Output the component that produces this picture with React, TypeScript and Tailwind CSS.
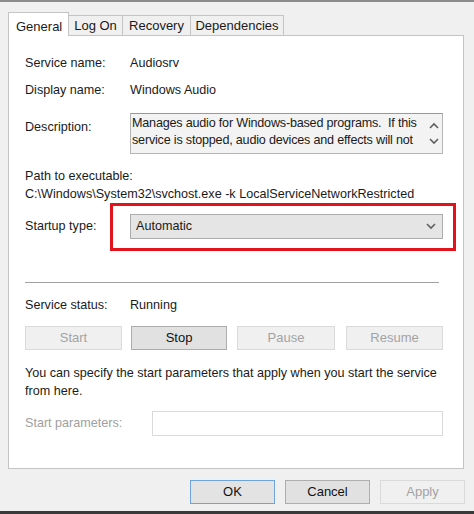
import React from "react";

const font = { fontFamily: '"Liberation Sans", Arial, sans-serif' };

function Btn({ label, disabled, def, w = "w-[96px]" }: { label: string; disabled?: boolean; def?: boolean; w?: string }) {
  const cls = disabled
    ? "bg-[#f0f0f0] border-[#dadada] text-[#a3a3a3]"
    : def
    ? "bg-[#e3e3e3] border-[#6fa3dc] text-[#111]"
    : "bg-[#e1e1e1] border-[#adadad] text-[#111]";
  return (
    <div className={`${w} h-[24px] border ${cls} flex items-center justify-center text-[13px]`}>{label}</div>
  );
}

function Chevron({ up }: { up?: boolean }) {
  return (
    <svg width="10" height="7" viewBox="0 0 10 7" className="block">
      <path d={up ? "M1 6 L5 2 L9 6" : "M1 1 L5 5 L9 1"} fill="none" stroke="#606060" strokeWidth="1.6" />
    </svg>
  );
}

export default function App() {
  return (
    <div className="w-[474px] h-[514px] bg-[#f0f0f0] flex flex-col overflow-hidden text-[12.6px] text-[#1a1a1a] whitespace-nowrap" style={font}>
      <div className="h-[2px] bg-[#8c8c8c]" />
      <div className="pl-[8px] pt-[8px] flex items-end h-[33px] text-[13px]">
        <div className="h-[24px] w-[61px] bg-white border border-b-0 border-[#c4c4c4] flex items-start pt-[4px] pl-[7px] relative z-10 -mb-[1px]">General</div>
        <div className="h-[20px] w-[54px] bg-[#f0f0f0] border border-b-0 border-l-0 border-[#c4c4c4] flex items-center justify-center">Log On</div>
        <div className="h-[20px] w-[68px] bg-[#f0f0f0] border border-b-0 border-l-0 border-[#c4c4c4] flex items-center justify-center">Recovery</div>
        <div className="h-[20px] w-[93px] bg-[#f0f0f0] border border-b-0 border-l-0 border-[#c4c4c4] flex items-center justify-center">Dependencies</div>
      </div>
      <div className="ml-[8px] w-[456px] h-[434px] bg-white border border-[#c4c4c4] relative pl-[16px] pr-[20px] flex flex-col">
        <div className="h-[18px] mt-[18px] flex items-center">
          <div className="w-[105px]">Service name:</div>
          <div>Audiosrv</div>
        </div>
        <div className="h-[18px] mt-[9px] flex items-center">
          <div className="w-[105px]">Display name:</div>
          <div>Windows Audio</div>
        </div>
        <div className="mt-[14px] flex items-start">
          <div className="w-[105px] mt-[5px] leading-[18px]">Description:</div>
          <div className="w-[313px] h-[41px] border border-[#b5b5b5] border-t-[#999] bg-[#f3f3f3] flex">
            <div className="flex-1 pl-[1px] pt-[1px] leading-[17px] overflow-hidden tracking-[-0.2px]">
              <div>Manages audio for Windows-based programs.&nbsp; If this</div>
              <div>service is stopped, audio devices and effects will not</div>
            </div>
            <div className="w-[17px] flex flex-col items-center pt-[8px] gap-[9px]">
              <Chevron up />
              <Chevron />
            </div>
          </div>
        </div>
        <div className="h-[18px] mt-[13px] flex items-center">Path to executable:</div>
        <div className="h-[18px] flex items-center">C:\Windows\System32\svchost.exe -k LocalServiceNetworkRestricted</div>
        <div className="mt-[11px] flex items-center relative">
          <div className="w-[105px]">Startup type:</div>
          <div className="w-[313px] h-[25px] border border-[#acacac] bg-[#e5e5e5] flex items-center pl-[5px] pr-[6px]">
            <div className="flex-1">Automatic</div>
            <Chevron />
          </div>
          <div className="absolute left-[85px] top-[-11px] w-[346px] h-[48px] border-[3px] border-[#e3131b]" />
        </div>
        <div className="mt-[43px] h-[1px] w-[414px] bg-[#a0a0a0]" />
        <div className="h-[18px] mt-[13px] flex items-center">
          <div className="w-[105px]">Service status:</div>
          <div>Running</div>
        </div>
        <div className="mt-[12px] flex items-center">
          <Btn label="Start" disabled w="w-[97px]" />
          <div className="w-[9px]" />
          <Btn label="Stop" w="w-[96px]" />
          <div className="w-[10px]" />
          <Btn label="Pause" disabled w="w-[98px]" />
          <div className="w-[11px]" />
          <Btn label="Resume" disabled w="w-[97px]" />
        </div>
        <div className="mt-[14px] leading-[18px]">
          <div>You can specify the start parameters that apply when you start the service</div>
          <div>from here.</div>
        </div>
        <div className="mt-[11px] flex items-center">
          <div className="w-[127px] text-[#a0a0a0]">Start parameters:</div>
          <div className="w-[291px] h-[25px] border border-[#d9d9d9] bg-white" />
        </div>
      </div>
      <div className="mt-[11px] flex pl-[190px]">
        <Btn label="OK" def w="w-[85px]" />
        <div className="w-[10px]" />
        <Btn label="Cancel" w="w-[85px]" />
        <div className="w-[10px]" />
        <Btn label="Apply" disabled w="w-[85px]" />
      </div>
      <div className="flex-1" />
      <div className="h-[3px] bg-[#3a3a3a]" />
    </div>
  );
}
